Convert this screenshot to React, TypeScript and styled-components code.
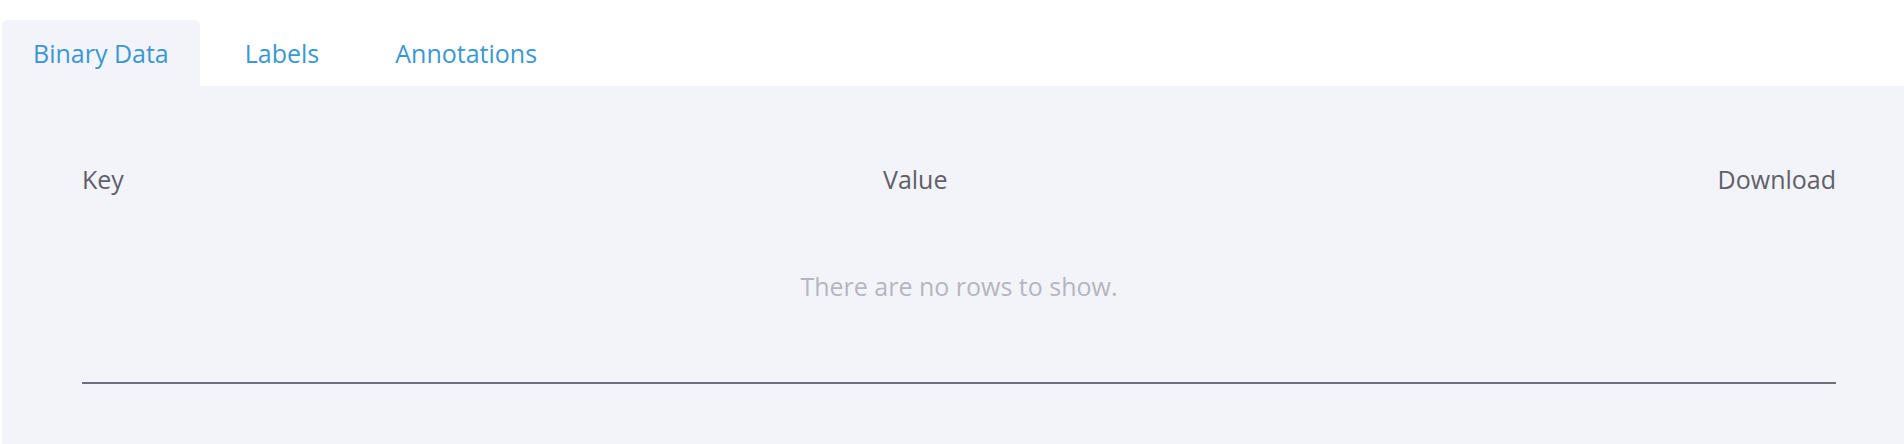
import styled, { createGlobalStyle } from "styled-components";

const GlobalStyle = createGlobalStyle`
  html, body {
    margin: 0;
    padding: 0;
    background: #ffffff;
    font-family: "Open Sans", "Noto Sans", sans-serif;
  }
`;

const tabs = ["Binary Data", "Labels", "Annotations"];

export default function App() {
  return (
    <>
      <GlobalStyle />
      <Wrapper>
        <TabList>
          {tabs.map((t, i) => (
            <Tab key={t} $active={i === 0}>
              {t}
            </Tab>
          ))}
        </TabList>
        <Panel>
          <Table>
            <HeaderRow>
              <HeadCell>Key</HeadCell>
              <HeadCell>Value</HeadCell>
              <HeadCell $right>Download</HeadCell>
            </HeaderRow>
            <Empty>There are no rows to show.</Empty>
          </Table>
        </Panel>
      </Wrapper>
    </>
  );
}

const Wrapper = styled.div`
  padding: 20px 0 0 2px;
  height: 444px;
  box-sizing: border-box;
  display: flex;
  flex-direction: column;
  overflow: hidden;
`;

const TabList = styled.div`
  display: flex;
  gap: 14px;
`;

const Tab = styled.div<{ $active?: boolean }>`
  height: 66px;
  line-height: 66px;
  padding: 0 31px;
  font-size: 25px;
  color: #3b97d3;
  border-radius: 6px 6px 0 0;
  background: ${(p) => (p.$active ? "#f3f4f9" : "transparent")};
  cursor: pointer;
`;

const Panel = styled.div`
  flex: 1;
  background: #f3f4f9;
  padding: 73px 68px 0 80px;
`;

const Table = styled.div`
  border-bottom: 2px solid #6e6f7a;
`;

const HeaderRow = styled.div`
  display: grid;
  grid-template-columns: 801px 1fr auto;
  line-height: 40px;
`;

const HeadCell = styled.div<{ $right?: boolean }>`
  font-size: 25px;
  color: #5f606a;
  text-align: ${(p) => (p.$right ? "right" : "left")};
`;

const Empty = styled.div`
  padding: 67px 0 76px;
  line-height: 40px;
  font-size: 25px;
  color: #b5b6c0;
  text-align: center;
`;
